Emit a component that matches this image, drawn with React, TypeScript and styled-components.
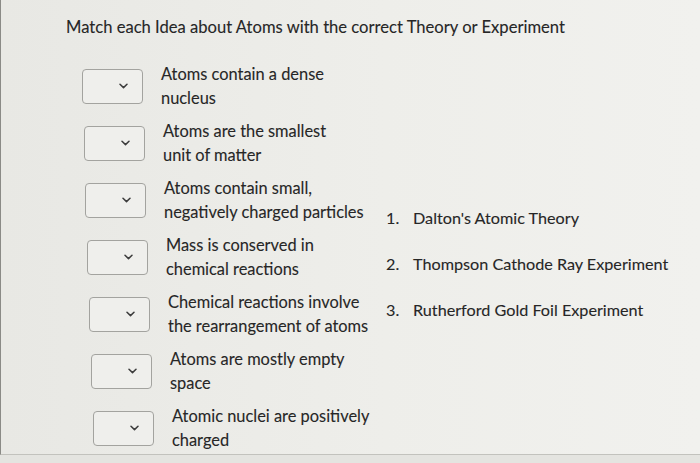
import styled, { createGlobalStyle } from "styled-components";

const GlobalStyle = createGlobalStyle`
  html, body {
    margin: 0;
    padding: 0;
    background: #e4e4e0;
  }
  body {
    font-family: Lato, "Liberation Sans", sans-serif;
    color: #262626;
    -webkit-text-stroke: 0.1px #262626;
  }
`;

const ideas: { lines: string[]; indent: number }[] = [
  { lines: ["Atoms contain a dense", "nucleus"], indent: 0 },
  { lines: ["Atoms are the smallest", "unit of matter"], indent: 2 },
  { lines: ["Atoms contain small,", "negatively charged particles"], indent: 3 },
  { lines: ["Mass is conserved in", "chemical reactions"], indent: 5 },
  { lines: ["Chemical reactions involve", "the rearrangement of atoms"], indent: 7 },
  { lines: ["Atoms are mostly empty", "space"], indent: 9 },
  { lines: ["Atomic nuclei are positively", "charged"], indent: 11 },
];

const theories = [
  "Dalton's Atomic Theory",
  "Thompson Cathode Ray Experiment",
  "Rutherford Gold Foil Experiment",
];

const Chevron = () => (
  <svg width="9" height="6" viewBox="0 0 9 6" fill="none">
    <path d="M1 1.2 L4.5 4.6 L8 1.2" stroke="#3c3c3c" strokeWidth="1.5" strokeLinecap="round" strokeLinejoin="round" />
  </svg>
);

const App = () => {
  return (
    <Page>
      <GlobalStyle />
      <Title>Match each Idea about Atoms with the correct Theory or Experiment</Title>
      <Matching>
        <IdeaList>
          {ideas.map((idea) => (
            <IdeaRow key={idea.lines[0]} $indent={idea.indent}>
              <SelectBox>
                <Chevron />
              </SelectBox>
              <IdeaText>
                {idea.lines[0]}
                <br />
                {idea.lines[1]}
              </IdeaText>
            </IdeaRow>
          ))}
        </IdeaList>
        <TheoryList>
          {theories.map((t, i) => (
            <TheoryItem key={t}>
              <Num>{i + 1}.</Num>
              <span>{t}</span>
            </TheoryItem>
          ))}
        </TheoryList>
      </Matching>
    </Page>
  );
};

export default App;

const Page = styled.div`
  height: 455px;
  box-sizing: border-box;
  padding: 15px 0 0 65px;
  background: linear-gradient(90deg, #e8e8e4 0%, #eeeeea 55%, #f1f1ee 100%);
  border-left: 1px solid #8a8a86;
  border-bottom: 1px solid #c2c2bd;
  overflow: hidden;
`;

const Title = styled.h1`
  margin: 0;
  font-size: 16.6px;
  font-weight: 400;
  line-height: 24px;
`;

const Matching = styled.div`
  display: flex;
  margin-top: 23px;
  padding-left: 16px;
`;

const IdeaList = styled.div`
  display: flex;
  flex-direction: column;
  gap: 9px;
  width: 304px;
  flex-shrink: 0;
`;

const IdeaRow = styled.div<{ $indent: number }>`
  display: flex;
  align-items: center;
  gap: 18px;
  margin-left: ${(p) => p.$indent}px;
`;

const SelectBox = styled.div`
  width: 61px;
  height: 35px;
  box-sizing: border-box;
  flex-shrink: 0;
  display: flex;
  align-items: center;
  justify-content: flex-end;
  padding-right: 14px;
  border: 1px solid #a3a39f;
  border-radius: 4px;
  background: #efefec;
`;

const IdeaText = styled.div`
  font-size: 16.4px;
  line-height: 24px;
  white-space: nowrap;
`;

const TheoryList = styled.ol`
  list-style: none;
  margin: 0;
  padding: 144px 0 0 0;
  display: flex;
  flex-direction: column;
  gap: 22px;
`;

const TheoryItem = styled.li`
  display: flex;
  font-size: 16.2px;
  line-height: 24px;
  white-space: nowrap;
`;

const Num = styled.span`
  width: 27px;
  flex-shrink: 0;
`;
